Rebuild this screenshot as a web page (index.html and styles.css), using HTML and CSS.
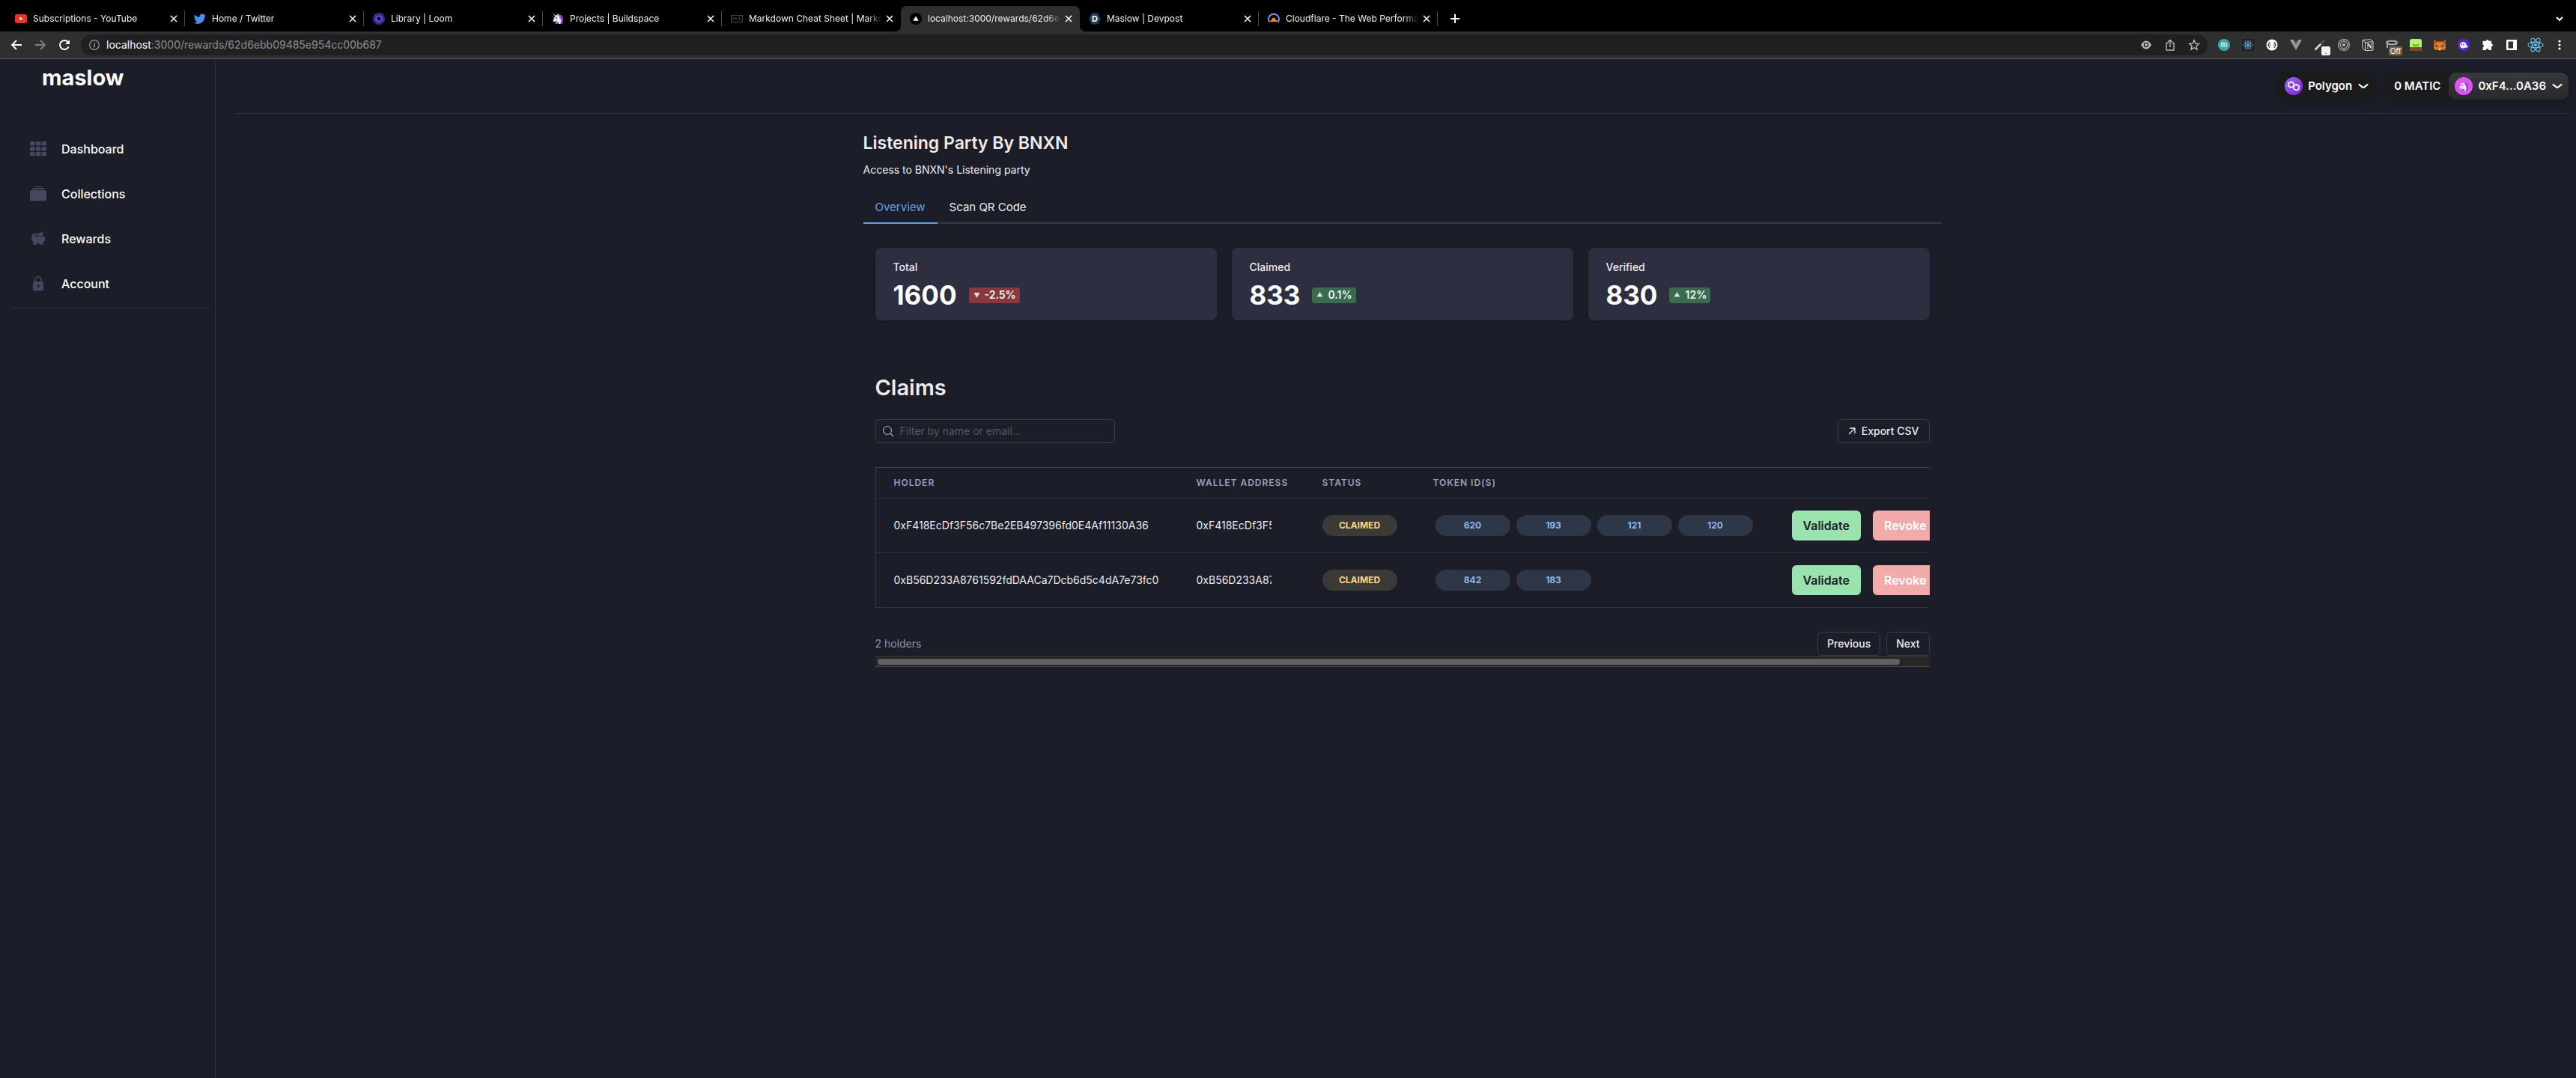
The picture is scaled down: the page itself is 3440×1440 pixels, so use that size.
FILE: index.html
```html
<!DOCTYPE html>
<html lang="en">
<head>
  <meta charset="UTF-8">
  <meta name="viewport" content="width=device-width, initial-scale=1.0">
  <title>Maslow</title>
  <link rel="stylesheet" href="styles.css">
</head>
<body>
  <svg class="sprite" aria-hidden="true">
    <symbol id="i-close" viewBox="0 0 16 16"><path d="M4 4l8 8M12 4l-8 8" stroke="#fff" stroke-width="1.5" fill="none"/></symbol>
    <symbol id="i-chevron" viewBox="0 0 16 16"><path d="M2.500 6L7 9.600q1 .6 2 0L13.500 6" stroke="#fff" stroke-width="2.2" stroke-linecap="round" fill="none"/></symbol>
    <symbol id="i-react" viewBox="0 0 24 24"><g stroke="#61c9ee" stroke-width="1.200" fill="none"><ellipse cx="12" cy="12" rx="11" ry="4.2"/><ellipse cx="12" cy="12" rx="11" ry="4.2" transform="rotate(60 12 12)"/><ellipse cx="12" cy="12" rx="11" ry="4.2" transform="rotate(120 12 12)"/></g><circle cx="12" cy="12" r="2.2" fill="#61c9ee"/></symbol>
    <symbol id="i-unicorn" viewBox="0 0 16 16"><path d="M6 3q3-1.500 5 .5Q14 6 13 12l-1 3H4.500q0-3 2.500-4.500-2 0-3 1.500-2 .5-2.500-1.500Q3 7 4 5z" fill="#ece8f1"/><path d="M1 .5L6 4 4.500 5.500z" fill="#f08a9c"/><path d="M7 1q2 .5 2 2.500L7.500 4z" fill="#5fc27a"/><path d="M8.500 2.500Q14 2 14.800 8q.5 4-1.300 7-1.500.5-2.500-.5 2-3.500.5-6.500-1.500-1-1.500-3z" fill="#9148c9"/><path d="M4.500 15q1-3 4-2.500l1 2.500z" fill="#7b3fb0"/><circle cx="6" cy="7" r=".9" fill="#33254a"/></symbol>
  </svg>

  <!-- Browser -->
  <header class="browser">
    <div class="tab-strip">
      <div class="tab">
        <svg class="favicon" viewBox="0 0 16 16"><rect y="2" width="16" height="12" rx="3" fill="#ea3323"/><path d="M6.500 5.500v5L10.500 8z" fill="#fff"/></svg>
        <span class="tab-title">Subscriptions - YouTube</span>
        <button class="tab-close" aria-label="Close tab"><svg><use href="#i-close"/></svg></button>
      </div>
      <div class="tab">
        <svg class="favicon" viewBox="0 0 24 24"><path fill="#4a8ff0" d="M23.600 4.900a9 9 0 0 1-2.800.8 4.900 4.900 0 0 0 2.200-2.700 9.600 9.600 0 0 1-3.100 1.200 4.900 4.900 0 0 0-8.400 4.500A13.900 13.900 0 0 1 1.400 3.600a4.900 4.900 0 0 0 1.500 6.500 4.800 4.800 0 0 1-2.200-.6 4.900 4.900 0 0 0 3.900 4.900 4.900 4.900 0 0 1-2.200.1 4.900 4.900 0 0 0 4.600 3.400A9.900 9.900 0 0 1 0 20a13.900 13.900 0 0 0 21.400-12.400 10 10 0 0 0 2.200-2.700z"/></svg>
        <span class="tab-title">Home / Twitter</span>
        <button class="tab-close" aria-label="Close tab"><svg><use href="#i-close"/></svg></button>
      </div>
      <div class="tab">
        <svg class="favicon" viewBox="0 0 16 16"><g stroke="#6b4bf0" stroke-width="1.300"><path d="M8 0v5M8 11v5M0 8h5M11 8h5M2.300 2.300l3.500 3.500M10.200 10.200l3.500 3.500M2.300 13.700l3.500-3.500M10.200 5.800l3.500-3.500M4.900.6l2 4.700M9.100 10.700l2 4.700M.6 11.100l4.700-2M10.700 6.900l4.700-2M.6 4.900l4.700 2M10.700 9.100l4.700 2M4.900 15.400l2-4.700M9.100 5.300l2-4.700"/></g><circle cx="8" cy="8" r="3" fill="#000" stroke="#6b4bf0"/></svg>
        <span class="tab-title">Library | Loom</span>
        <button class="tab-close" aria-label="Close tab"><svg><use href="#i-close"/></svg></button>
      </div>
      <div class="tab">
        <svg class="favicon"><use href="#i-unicorn"/></svg>
        <span class="tab-title">Projects | Buildspace</span>
        <button class="tab-close" aria-label="Close tab"><svg><use href="#i-close"/></svg></button>
      </div>
      <div class="tab no-divider">
        <svg class="favicon" viewBox="0 0 16 16" fill="none" stroke="#4a4a4a"><rect x=".5" y="3.500" width="15" height="9"/><path d="M3 10V6l2 2 2-2v4M11.500 5.500v4M9.500 8l2 2 2-2"/></svg>
        <span class="tab-title">Markdown Cheat Sheet | Markdo</span>
        <button class="tab-close" aria-label="Close tab"><svg><use href="#i-close"/></svg></button>
      </div>
      <div class="tab active">
        <svg class="favicon" viewBox="0 0 16 16"><circle cx="8" cy="8" r="8" fill="#000"/><path d="M8 4.500l3.700 6.300H4.300z" fill="#fff"/></svg>
        <span class="tab-title">localhost:3000/rewards/62d6eb</span>
        <button class="tab-close" aria-label="Close tab"><svg><use href="#i-close"/></svg></button>
      </div>
      <div class="tab">
        <svg class="favicon" viewBox="0 0 16 16"><path d="M4 .5h8L16 8l-4 7.500H4L0 8z" fill="#1c4058"/><text x="8" y="12" class="icon-letter devpost-letter">D</text></svg>
        <span class="tab-title">Maslow | Devpost</span>
        <button class="tab-close" aria-label="Close tab"><svg><use href="#i-close"/></svg></button>
      </div>
      <div class="tab">
        <svg class="favicon" viewBox="0 0 16 16"><path d="M2.500 13A7 7 0 1 1 13.500 13" fill="none" stroke="#7b93f5" stroke-width="2"/><path d="M3 12q0-2 2-2.500Q6.500 5 9.500 7.500q1 .5 1 2 2.500 0 2.500 2.500z" fill="#f0862c"/></svg>
        <span class="tab-title">Cloudflare - The Web Performa</span>
        <button class="tab-close" aria-label="Close tab"><svg><use href="#i-close"/></svg></button>
      </div>
      <button class="icon-btn new-tab" aria-label="New tab"><svg class="icon-16" viewBox="0 0 16 16"><path d="M8 2v12M2 8h12" stroke="#fff" stroke-width="2"/></svg></button>
      <button class="icon-btn tab-search" aria-label="Search tabs"><svg class="icon-16" viewBox="0 0 16 16"><path d="M4 6l4 4 4-4" fill="none" stroke="#fff" stroke-width="2"/></svg></button>
    </div>

    <div class="toolbar">
      <div class="nav-buttons">
        <button class="icon-btn" aria-label="Back"><svg class="icon-16" viewBox="0 0 16 16"><path d="M15 8H2M8 2L2 8l6 6" fill="none" stroke="#fff" stroke-width="1.800"/></svg></button>
        <button class="icon-btn" aria-label="Forward"><svg class="icon-16" viewBox="0 0 16 16"><path d="M1 8h13M8 2l6 6-6 6" fill="none" stroke="#808080" stroke-width="1.800"/></svg></button>
        <button class="icon-btn" aria-label="Reload"><svg class="icon-16" viewBox="0 0 16 16"><path d="M13.500 10.500A6 6 0 1 1 12.500 4" fill="none" stroke="#fff" stroke-width="2"/><path d="M15 1v6H9z" fill="#fff"/></svg></button>
      </div>
      <div class="address-bar">
        <svg class="icon-16" viewBox="0 0 16 16"><circle cx="8" cy="8" r="6.300" fill="none" stroke="#9a9a9e" stroke-width="1.200"/><path d="M8 7v4.500M8 4.300v1.500" stroke="#9a9a9e" stroke-width="1.500"/></svg>
        <span class="url">localhost<span class="url-path">:3000/rewards/62d6ebb09485e954cc00b687</span></span>
        <button class="icon-btn" aria-label="View"><svg class="icon-16" viewBox="0 0 16 16"><path d="M1 8q7-11 14 0-7 11-14 0z" fill="#bdbdbd"/><circle cx="8" cy="8" r="3.300" fill="#202022"/><circle cx="8" cy="8" r="1.900" fill="#bdbdbd"/></svg></button>
        <button class="icon-btn" aria-label="Share"><svg class="icon-16" viewBox="0 0 16 16"><path d="M5.500 5.500H3V15h10V5.500h-2.500M8 11V1.500M5 4.300l3-3 3 3" fill="none" stroke="#bdbdbd" stroke-width="1.300"/></svg></button>
        <button class="icon-btn" aria-label="Bookmark"><svg class="icon-16" viewBox="0 0 16 16"><path d="M8 1.800l1.800 4.300 4.700.4-3.600 3 1.100 4.600L8 11.700 4 14.100l1.100-4.600-3.600-3 4.700-.4z" fill="none" stroke="#c4c4c4" stroke-width="1.300"/></svg></button>
      </div>
      <div class="extensions">
        <button class="icon-btn" aria-label="Momentum"><svg class="icon-16" viewBox="0 0 16 16"><circle cx="8" cy="8" r="8" fill="#3fa9a8"/><text x="8" y="11" class="icon-letter">m</text></svg></button>
        <button class="icon-btn" aria-label="React tools"><svg class="icon-16" viewBox="0 0 16 16"><rect width="16" height="16" fill="#202020"/><use href="#i-react" x="1" y="1" width="14" height="14"/></svg></button>
        <button class="icon-btn" aria-label="JSON viewer"><svg class="icon-16" viewBox="0 0 16 16"><circle cx="8" cy="8" r="7.500" fill="#fff"/><path d="M5.500 4.500q-1.500 0-1.500 1.500v1l-1 1 1 1v1q0 1.500 1.500 1.500M10.500 4.500q1.500 0 1.500 1.500v1l1 1-1 1v1q0 1.500-1.500 1.500M6 8h1M9 8h1" fill="none" stroke="#222" stroke-width="1.200"/></svg></button>
        <button class="icon-btn" aria-label="Vue tools"><svg class="icon-16" viewBox="0 0 16 16"><path d="M0 1h5l3 6 3-6h5L8 15z" fill="#9b9b9b"/><path d="M3.500 1H6l2 4 2-4h2.500L8 9z" fill="#6f6f6f"/></svg></button>
        <button class="icon-btn" aria-label="Color picker"><svg class="icon-16" viewBox="0 0 16 16"><path d="M1.500 14.500L10 6" stroke="#d8d8d8" stroke-width="2.500"/><path d="M9 5l2 2M10 6l4-4" stroke="#555" stroke-width="3"/></svg><span class="ext-badge white-badge">.</span></button>
        <button class="icon-btn" aria-label="Recorder"><svg class="icon-16" viewBox="0 0 16 16" fill="none" stroke="#a7a7a7" stroke-width="1.400"><circle cx="8" cy="8" r="7.300"/><circle cx="8" cy="8" r="4.700"/><circle cx="8" cy="8" r="1.500" fill="#a7a7a7"/></svg></button>
        <button class="icon-btn" aria-label="Notion"><svg class="icon-16" viewBox="0 0 16 16"><path d="M1 1.500L11.500.8 15 3.500V15l-10.500.7L1 12z" fill="#292929" stroke="#ddd"/><path d="M1 1.500l3.500 3L15 3.700" fill="none" stroke="#ddd"/><path d="M4.500 4.500v11" stroke="#ddd"/><text x="10" y="13" class="icon-letter serif-letter">N</text></svg></button>
        <button class="icon-btn" aria-label="Loader"><svg class="icon-16" viewBox="0 0 16 16"><ellipse cx="8" cy="5" rx="7" ry="2.500" fill="none" stroke="#aaa" stroke-width="2"/><path d="M1 6v6h2V8" fill="#aaa"/></svg><span class="ext-badge off-badge">Off</span></button>
        <button class="icon-btn" aria-label="Forest"><svg class="icon-16" viewBox="0 0 16 16"><rect width="16" height="16" rx="3" fill="#b9f36c"/><path d="M0 11h16v2a3 3 0 0 1-3 3H3a3 3 0 0 1-3-3z" fill="#7a4d16"/><path d="M8 10Q4 10 3.500 6.500 7 6.500 8 9q1-2 4.500-2.500Q12 10 8 10z" fill="#4ca52c"/></svg></button>
        <button class="icon-btn" aria-label="Wallet"><svg class="icon-16" viewBox="0 0 16 16"><path d="M0 1l5 2.500h6L16 1l-.5 7 .5 3.500-1.500 3.500-4-1-1.500 1.500H7L5.500 14l-4 1L0 11.500.5 8z" fill="#dd7b2b"/><path d="M3 8l3 1.500-.5 1.500-3-1zM13 8l-3 1.500.5 1.500 3-1z" fill="#5a3415"/><path d="M0 1l5 2.500L2 7zM16 1l-5 2.500L14 7z" fill="#9b4f22"/><path d="M6 13h4l-1 2H7z" fill="#e6d3c0"/></svg></button>
        <button class="icon-btn" aria-label="Phantom"><svg class="icon-16" viewBox="0 0 16 16"><circle cx="8" cy="8" r="8" fill="#5428c8"/><path d="M2.800 8.500A4.500 4.500 0 0 1 11.500 7q.3 3 2.500 3.500-1.500 1.800-4 1-3 2-5.500.2-2-1.200-1.700-3.200z" fill="#f1edff"/><path d="M5.500 6.500v2M8 6.500v2" stroke="#4720b0" stroke-width="1.200"/></svg></button>
        <button class="icon-btn" aria-label="Extensions"><svg class="icon-16" viewBox="0 0 16 16"><path d="M6 2.800a1.800 1.800 0 0 1 3.600 0H13v3.600a1.900 1.900 0 0 1 0 3.800V15H9.500a1.900 1.900 0 0 0-3.800 0H1.500v-3.800a1.900 1.900 0 0 0 0-3.700V2.800z" fill="#fff"/></svg></button>
        <button class="icon-btn" aria-label="Side panel"><svg class="icon-16" viewBox="0 0 16 16"><path d="M1 1h14v14H1zM3.500 3.500v9h6.500v-9z" fill="#fff" fill-rule="evenodd"/></svg></button>
        <button class="icon-btn" aria-label="Profile"><svg class="icon-22"><use href="#i-react"/></svg></button>
        <button class="icon-btn" aria-label="Menu"><svg class="icon-16" viewBox="0 0 16 16" fill="#fff"><circle cx="8" cy="3" r="1.600"/><circle cx="8" cy="8" r="1.600"/><circle cx="8" cy="13" r="1.600"/></svg></button>
      </div>
    </div>
  </header>

  <div class="app">
    <aside class="sidebar">
      <a class="logo" href="#">maslow</a>
      <nav class="menu">
        <a class="menu-item" href="#">
          <svg viewBox="0 0 22 20"><rect width="6.500" height="5.500" rx="1.200"/><rect x="7.800" width="6.500" height="5.500" rx="1.200"/><rect x="15.500" width="6.500" height="5.500" rx="1.200"/><rect y="7" width="6.500" height="5.500" rx="1.200"/><rect x="7.800" y="7" width="6.500" height="5.500" rx="1.200"/><rect x="15.500" y="7" width="6.500" height="5.500" rx="1.200"/><rect y="14" width="6.500" height="5.500" rx="1.200"/><rect x="7.800" y="14" width="6.500" height="5.500" rx="1.200"/><rect x="15.500" y="14" width="6.500" height="5.500" rx="1.200"/></svg>
          Dashboard
        </a>
        <a class="menu-item" href="#">
          <svg viewBox="0 0 22 20"><path d="M6 0h10l1 1H5zM3.500 2h15l1 2h-17z"/><rect y="5" width="22" height="14.500" rx="2.500"/></svg>
          Collections
        </a>
        <a class="menu-item" href="#">
          <svg viewBox="0 0 22 20"><path fill-rule="evenodd" d="M17 .8v4l1.300 2.200H20v6l-2.700 1.300V18h-4.500v-2H9.500v2H4.300v-3.500Q2 12 2 8.500 1.500 3 7 3h5q2-2.200 5-2.200zM7 5.300v1.300h5V5.300zM15 6.800a1 1 0 1 0 2 0 1 1 0 0 0-2 0z"/></svg>
          Rewards
        </a>
        <a class="menu-item" href="#">
          <svg viewBox="0 0 22 20"><path d="M7 8V5a4 4 0 0 1 8 0v3" fill="none" stroke="#434860" stroke-width="1.600"/><path fill-rule="evenodd" d="M6 7h10q2 0 2 2v8.500q0 2-2 2H6q-2 0-2-2V9q0-2 2-2zm5 4.500a1.800 1.800 0 1 0 0 3.600 1.800 1.800 0 0 0 0-3.600z"/></svg>
          Account
        </a>
      </nav>
    </aside>

    <main class="main">
      <div class="topbar">
        <button class="pill network">
          <svg class="avatar" viewBox="0 0 24 24"><defs><linearGradient id="poly" x1="0" y1="0" x2="1" y2="1"><stop offset="0" stop-color="#a46be8"/><stop offset="1" stop-color="#7620df"/></linearGradient></defs><circle cx="12" cy="12" r="12" fill="url(#poly)"/><path d="M11 12.500l-2.500 1.600L5 12V8.300L8.500 6.200 12 8.300v7.400l3.500 2 3.500-2V12l-3.500-2-2.500 1.500" fill="none" stroke="#fff" stroke-width="1.600"/></svg>
          Polygon
          <svg class="icon-16"><use href="#i-chevron"/></svg>
        </button>
        <div class="pill wallet">
          <span>0 MATIC</span>
          <button class="account">
            <svg class="avatar" viewBox="0 0 24 24"><circle cx="12" cy="12" r="12" fill="#df52f5"/><use href="#i-unicorn" x="5" y="5" width="14" height="14"/></svg>
            0xF4...0A36
            <svg class="icon-16"><use href="#i-chevron"/></svg>
          </button>
        </div>
      </div>

      <div class="container">
        <h1>Listening Party By BNXN</h1>
        <p class="description">Access to BNXN's Listening party</p>

        <div class="tabs" role="tablist">
          <button class="page-tab selected" role="tab" aria-selected="true">Overview</button>
          <button class="page-tab" role="tab" aria-selected="false">Scan QR Code</button>
        </div>

        <div class="panel">
          <div class="stats">
            <div class="stat-card">
              <div class="stat-label">Total</div>
              <div class="stat-row"><span class="stat-number">1600</span><span class="change down"><svg viewBox="0 0 8 8"><path d="M0 1h8L4 8z"/></svg>-2.5%</span></div>
            </div>
            <div class="stat-card">
              <div class="stat-label">Claimed</div>
              <div class="stat-row"><span class="stat-number">833</span><span class="change up"><svg viewBox="0 0 8 8"><path d="M0 6.500h8L4 0z"/></svg>0.1%</span></div>
            </div>
            <div class="stat-card">
              <div class="stat-label">Verified</div>
              <div class="stat-row"><span class="stat-number">830</span><span class="change up"><svg viewBox="0 0 8 8"><path d="M0 6.500h8L4 0z"/></svg>12%</span></div>
            </div>
          </div>

          <h2>Claims</h2>
          <div class="actions">
            <label class="search">
              <svg class="icon-16" viewBox="0 0 16 16" fill="none" stroke="#a0a6c0" stroke-width="1.200"><circle cx="7" cy="7" r="5.500"/><path d="M11 11l4 4"/></svg>
              <input type="text" aria-label="Filter" placeholder="Filter by name or email...">
            </label>
            <button class="btn"><svg class="arrow" viewBox="0 0 10 10"><path d="M1 9l8-8M2 1h7v7" fill="none" stroke="#ececee" stroke-width="1.300"/></svg>Export CSV</button>
          </div>

          <div class="table-wrap">
            <table>
              <colgroup>
                <col class="col-holder">
                <col class="col-wallet">
                <col class="col-status">
                <col class="col-tokens">
                <col>
              </colgroup>
              <thead>
                <tr><th>Holder</th><th>Wallet Address</th><th>Status</th><th>Token ID(s)</th><th></th></tr>
              </thead>
              <tbody>
                <tr>
                  <td>0xF418EcDf3F56c7Be2EB497396fd0E4Af11130A36</td>
                  <td><div class="clip">0xF418EcDf3F56</div></td>
                  <td><span class="badge claimed">Claimed</span></td>
                  <td><div class="tokens"><span class="badge token">620</span><span class="badge token">193</span><span class="badge token">121</span><span class="badge token">120</span></div></td>
                  <td><div class="row-actions"><button class="validate">Validate</button><button class="revoke">Revoke</button></div></td>
                </tr>
                <tr>
                  <td>0xB56D233A8761592fdDAACa7Dcb6d5c4dA7e73fc0</td>
                  <td><div class="clip">0xB56D233A876</div></td>
                  <td><span class="badge claimed">Claimed</span></td>
                  <td><div class="tokens"><span class="badge token">842</span><span class="badge token">183</span></div></td>
                  <td><div class="row-actions"><button class="validate">Validate</button><button class="revoke">Revoke</button></div></td>
                </tr>
              </tbody>
            </table>
          </div>

          <div class="pagination">
            <span class="count">2 holders</span>
            <button class="btn small">Previous</button>
            <button class="btn small">Next</button>
          </div>
          <div class="scrollbar"><div class="thumb"></div></div>
        </div>
      </div>
    </main>
  </div>
</body>
</html>
```
FILE: styles.css
```css
* {
  box-sizing: border-box;
}

body {
  margin: 0;
  min-height: 100vh;
  display: flex;
  flex-direction: column;
  background: #1b1d28;
  color: #ececee;
  font-family: Inter, "Liberation Sans", sans-serif;
  font-size: 14px;
  line-height: 20px;
}

button {
  border: none;
  padding: 0;
  background: none;
  color: inherit;
  font: inherit;
  cursor: pointer;
}

a {
  color: inherit;
  text-decoration: none;
}

svg {
  flex-shrink: 0;
}

.sprite {
  display: none;
}

.icon-16 {
  width: 16px;
  height: 16px;
}

.icon-22 {
  width: 22px;
  height: 22px;
}

.icon-letter {
  fill: #fff;
  font-size: 10px;
  font-weight: 500;
  text-anchor: middle;
}

.devpost-letter {
  font-size: 11px;
  font-weight: 700;
}

.serif-letter {
  font-family: "Liberation Serif", serif;
  font-weight: 700;
}

/* Browser */
.browser {
  background: #2f2f2f;
  border-bottom: 1px solid #555;
}

.tab-strip {
  display: flex;
  height: 42px;
  padding: 8px 6px 0 8px;
  background: #000;
}

.tab {
  position: relative;
  display: flex;
  align-items: center;
  flex: 0 1 239px;
  min-width: 0;
  padding: 0 7px 0 12px;
  color: #f1f1f1;
  font-size: 12px;
}

.tab::after {
  content: "";
  position: absolute;
  right: 0;
  top: 7px;
  width: 1px;
  height: 20px;
  background: #4a4a4a;
}

.tab.no-divider::after {
  display: none;
}

.tab.active {
  background: #2f2f2f;
  border-radius: 8px 8px 0 0;
}

.tab.active::before,
.tab.active::after {
  content: "";
  position: absolute;
  top: auto;
  bottom: 0;
  width: 8px;
  height: 8px;
}

.tab.active::before {
  left: -8px;
  background: radial-gradient(circle at 0 0, #000 8px, #2f2f2f 8px);
}

.tab.active::after {
  right: -8px;
  background: radial-gradient(circle at 100% 0, #000 8px, #2f2f2f 8px);
}

.favicon {
  width: 16px;
  height: 16px;
  margin-right: 8px;
}

.tab-title {
  flex: 1;
  overflow: hidden;
  white-space: nowrap;
  -webkit-mask-image: linear-gradient(90deg, #000 calc(100% - 20px), transparent);
  mask-image: linear-gradient(90deg, #000 calc(100% - 20px), transparent);
}

.tab-close {
  width: 16px;
  height: 16px;
  margin-left: 2px;
}

.tab-close svg {
  display: block;
  width: 16px;
  height: 16px;
}

.icon-btn {
  position: relative;
  display: flex;
  align-items: center;
  justify-content: center;
  flex: 0 0 32px;
  height: 28px;
}

.new-tab {
  margin: 3px 0 0 7px;
}

.tab-search {
  margin: 3px 0 0 auto;
}

.toolbar {
  display: flex;
  align-items: center;
  height: 36px;
  padding: 0 6px;
}

.nav-buttons {
  display: flex;
  margin-right: 6px;
}

.address-bar {
  display: flex;
  align-items: center;
  flex: 1;
  height: 28px;
  padding: 0 2px 0 10px;
  background: #202022;
  border-radius: 14px;
}

.url {
  flex: 1;
  margin-left: 8px;
  color: #fff;
}

.url-path {
  color: #8e8e92;
}

.extensions {
  display: flex;
  margin-left: 6px;
}

.ext-badge {
  position: absolute;
  right: 2px;
  bottom: 0;
  border-radius: 2px;
  font-size: 10px;
  line-height: 12px;
  text-align: center;
}

.white-badge {
  width: 12px;
  background: #f2f2f2;
  color: #222;
}

.off-badge {
  width: 18px;
  background: #7a6243;
  color: #fff;
}

/* Sidebar */
.app {
  display: flex;
  flex: 1;
}

.sidebar {
  width: 288px;
  padding: 0 8px 0 16px;
  border-right: 1px solid #2e303c;
}

.logo {
  display: block;
  padding: 7px 0 0 40px;
  color: #fff;
  font-size: 29px;
  line-height: 36px;
  font-weight: 700;
}

.menu {
  padding: 47px 0 2px;
  border-bottom: 1px solid #2e303c;
}

.menu-item {
  display: flex;
  align-items: center;
  gap: 20px;
  height: 60px;
  padding-left: 24px;
  color: #fff;
  font-size: 16px;
  font-weight: 500;
}

.menu-item svg {
  width: 22px;
  height: 20px;
  fill: #434860;
}

/* Main */
.main {
  flex: 1;
  min-width: 0;
  padding: 0 8px 0 25px;
}

.topbar {
  display: flex;
  justify-content: flex-end;
  gap: 12px;
  height: 73px;
  padding-top: 16px;
  border-bottom: 1px solid #2e303c;
  color: #fff;
  font-size: 15px;
  font-weight: 600;
}

.pill {
  display: flex;
  align-items: center;
  height: 40px;
  background: #1b1b1e;
  border-radius: 12px;
  box-shadow: 0 4px 8px rgba(0, 0, 0, 0.1);
}

.network {
  gap: 7px;
  padding: 0 9px 0 10px;
}

.wallet {
  gap: 11px;
  padding: 0 2px 0 12px;
}

.account {
  display: flex;
  align-items: center;
  gap: 7px;
  height: 36px;
  padding: 0 7px 0 8px;
  background: linear-gradient(#38393d, #29292c);
  border-radius: 10px;
}

.avatar {
  width: 24px;
  height: 24px;
}

.container {
  max-width: 1440px;
  margin: 0 auto;
  padding-top: 23px;
}

h1,
h2,
p {
  margin: 0;
}

h1 {
  font-size: 23px;
  line-height: 32px;
  font-weight: 600;
}

.description {
  margin-top: 10px;
}

.tabs {
  display: flex;
  margin-top: 20px;
  border-bottom: 2px solid #363844;
}

.page-tab {
  height: 42px;
  margin-bottom: -2px;
  padding: 0 16px;
  border-bottom: 2px solid transparent;
  font-size: 15px;
}

.page-tab.selected {
  color: #6b9fe4;
  border-color: #6b9fe4;
}

.panel {
  padding: 32px 16px;
}

.stats {
  display: grid;
  grid-template-columns: repeat(3, 1fr);
  gap: 20px;
}

.stat-card {
  height: 97px;
  padding: 16px 24px;
  background: #2d2f40;
  border-radius: 8px;
  box-shadow: 0 2px 4px rgba(0, 0, 0, 0.15);
}

.stat-label {
  font-weight: 500;
}

.stat-row {
  display: flex;
  align-items: center;
  gap: 16px;
  margin-top: 6px;
}

.stat-number {
  color: #fff;
  font-size: 35px;
  line-height: 42px;
  font-weight: 700;
}

.change {
  display: flex;
  align-items: center;
  gap: 6px;
  height: 21px;
  padding: 0 5px 0 6px;
  border-radius: 4px;
  color: #f4f4f4;
  font-weight: 600;
}

.change svg {
  width: 9px;
  height: 8px;
  fill: #e2dcdc;
}

.change.down {
  background: #88393c;
}

.change.up {
  background: #3a6b50;
}

h2 {
  margin-top: 70px;
  font-size: 29px;
  line-height: 40px;
  font-weight: 600;
}

.actions {
  display: flex;
  justify-content: space-between;
  margin-top: 22px;
}

.search {
  display: flex;
  align-items: center;
  gap: 8px;
  width: 320px;
  height: 32px;
  padding: 0 8px;
  border: 1px solid #3b3d48;
  border-radius: 4px;
}

.search input {
  flex: 1;
  min-width: 0;
  padding: 0;
  border: none;
  outline: none;
  background: none;
  color: #ececee;
  font: inherit;
}

.search input::placeholder {
  color: #555761;
}

.btn {
  display: flex;
  align-items: center;
  gap: 8px;
  height: 32px;
  padding: 0 13px;
  border: 1px solid #3b3d48;
  border-radius: 6px;
  font-weight: 500;
}

.btn.small {
  padding: 0 12px;
}

.arrow {
  width: 10px;
  height: 10px;
}

.table-wrap {
  margin-top: 32px;
  overflow: hidden;
  border-top: 1px solid #3b3d48;
  border-left: 1px solid #3b3d48;
}

table {
  width: 1446px;
  table-layout: fixed;
  border-collapse: separate;
  border-spacing: 0;
}

.col-holder {
  width: 404px;
}

.col-wallet {
  width: 168px;
}

.col-status {
  width: 148px;
}

.col-tokens {
  width: 479px;
}

th,
td {
  padding: 0 24px;
  border-bottom: 1px solid #2e303f;
  text-align: left;
  white-space: nowrap;
}

th {
  height: 41px;
  color: #9aa0b8;
  font-size: 12px;
  font-weight: 600;
  letter-spacing: 1px;
  text-transform: uppercase;
}

td {
  height: 73px;
}

.clip {
  width: 100px;
  overflow: hidden;
}

.badge {
  display: flex;
  align-items: center;
  justify-content: center;
  width: 100px;
  height: 28px;
  border-radius: 14px;
  font-size: 12px;
  font-weight: 700;
  text-transform: uppercase;
}

.claimed {
  background: #3c3a36;
  color: #f5d684;
}

.token {
  background: #2e3747;
  color: #8db8ea;
}

.tokens {
  display: flex;
  gap: 8px;
  padding-left: 3px;
}

.row-actions {
  display: flex;
  gap: 16px;
}

.validate,
.revoke {
  height: 40px;
  padding: 0 15px;
  border-radius: 6px;
  font-size: 16px;
  font-weight: 600;
}

.validate {
  background: #9ae3ae;
  color: #1b1d28;
}

.revoke {
  background: #f2abab;
  color: #fff;
}

.pagination {
  display: flex;
  align-items: center;
  gap: 8px;
  margin-top: 32px;
}

.count {
  flex: 1;
  color: #8f94ab;
}

.scrollbar {
  height: 15px;
  padding: 3px 40px 3px 3px;
  background: #262626;
  border-top: 1px solid #363636;
  border-bottom: 1px solid #4b4b4b;
}

.thumb {
  height: 8px;
  background: #606060;
  border-radius: 4px;
}
```
